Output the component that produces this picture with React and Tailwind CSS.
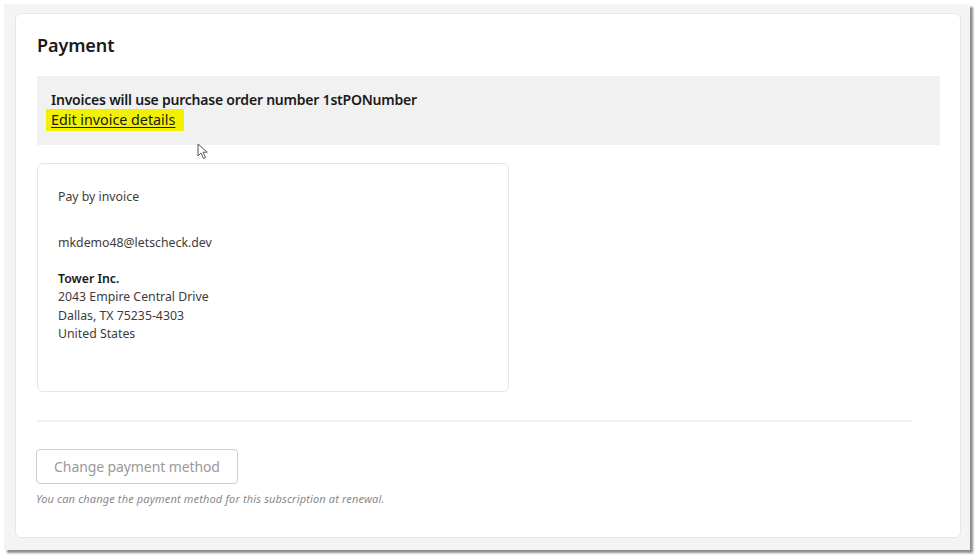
import React from 'react';

const font = { fontFamily: '"Noto Sans", "Open Sans", sans-serif' };

// Mouse pointer seen in the capture
const Cursor = () => (
  <svg width="12" height="17" viewBox="0 0 12 17" className="absolute left-[197px] top-[143px]">
    <path d="M1 1 L1 13 L4 10 L6.5 15.5 L8.5 14.5 L6 9.2 L10.2 9.2 Z" fill="#fff" stroke="#555" strokeWidth="1" strokeLinejoin="round" />
  </svg>
);

const App = () => {
  return (
    <div className="relative w-[979px] h-[560px] bg-white p-[4px]" style={font}>
      <div className="w-[966px] h-[546px] bg-[#f4f4f4] shadow-[3px_3px_2px_rgba(0,0,0,0.45)] pl-[11px] pt-[9px] pr-[9px] pb-[12px]">
        <div className="h-full bg-white border border-[#e6e6e6] rounded-[6px] pl-[21px] pr-[20px] pt-[19px]">
          <h2 className="text-[18px] leading-[24px] font-semibold text-[#1a1a1a] tracking-[-0.1px]">Payment</h2>

          <div className="mt-[19px] h-[69px] bg-[#f1f1f1] pl-[14px] pt-[14px]">
            <p className="text-[14px] leading-[20px] font-semibold text-[#1a1a1a] tracking-[-0.22px]">
              Invoices will use purchase order number 1stPONumber
            </p>
            <span className="block w-fit -mt-[1px] -ml-[5px] bg-[#f2f200] pl-[5px] pr-[9px] h-[22px] leading-[22px] text-[14.3px] text-[#1a1a1a] underline underline-offset-2">
              Edit invoice details
            </span>
          </div>

          <div className="mt-[18px] w-[472px] h-[229px] border border-[#e6e6e6] rounded-[6px] pl-[20px] pt-[24px] text-[12.3px] text-[#3c3c3c]">
            <p className="leading-[18px]">Pay by invoice</p>
            <p className="mt-[28px] leading-[18px]">mkdemo48@letscheck.dev</p>
            <div className="mt-[18px] leading-[18.4px]">
              <p className="font-semibold text-[#1a1a1a]">Tower Inc.</p>
              <p>2043 Empire Central Drive</p>
              <p>Dallas, TX 75235-4303</p>
              <p>United States</p>
            </div>
          </div>

          <div className="mt-[28px] w-[875px] h-[2px] bg-[#f0f0f0]" />

          <button className="mt-[27px] -ml-[1px] w-[202px] h-[35px] border border-[#cfcfcf] rounded-[4px] text-[14px] text-[#9a9a9a] bg-white tracking-[-0.1px]">
            Change payment method
          </button>
          <p className="mt-[8px] -ml-[1px] text-[11px] leading-[14px] italic text-[#8a8a8a] tracking-[0.15px]">
            You can change the payment method for this subscription at renewal.
          </p>
        </div>
      </div>
      <Cursor />
    </div>
  );
};

export default App;
